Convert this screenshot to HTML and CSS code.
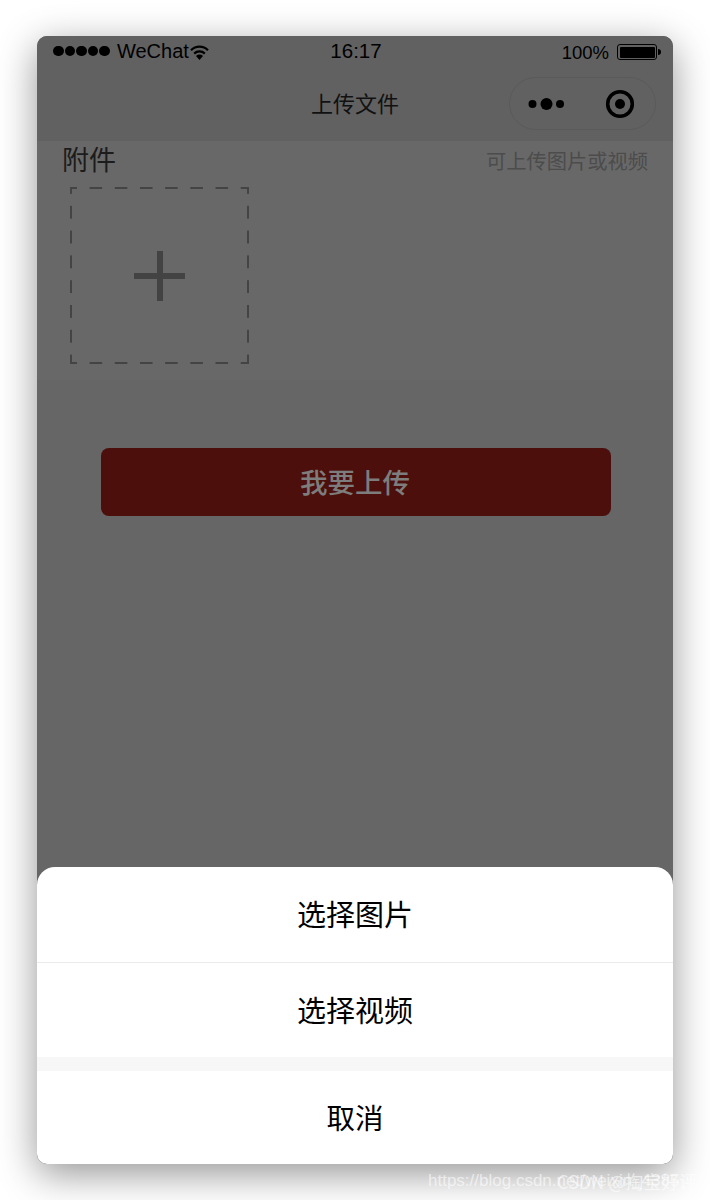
FILE: index.html
```html
<!DOCTYPE html>
<html lang="zh-CN">
<head>
<meta charset="utf-8">
<title>上传文件</title>
<link rel="stylesheet" href="styles.css">
</head>
<body>
<div class="phone">
  <div class="top">
    <div class="status">
      <div class="status-left">
        <span class="signal"><i></i><i></i><i></i><i></i><i></i></span>
        <span class="carrier">WeChat</span>
        <svg class="wifi" width="19" height="15" viewBox="0 0 19 15"><path d="M9.5 15 L6 11 A5 5 0 0 1 13 11 Z" fill="#000"/><path d="M4.2 8.6 A7.6 7.6 0 0 1 14.8 8.6" fill="none" stroke="#000" stroke-width="2.2"/><path d="M1 5.2 A12 12 0 0 1 18 5.2" fill="none" stroke="#000" stroke-width="2.2"/></svg>
      </div>
      <div class="time">16:17</div>
      <div class="status-right">
        <span class="percent">100%</span>
        <span class="battery"><span class="battery-fill"></span></span>
        <span class="battery-nub"></span>
      </div>
    </div>
    <div class="nav">
      <div class="title">上传文件</div>
      <div class="capsule">
        <svg width="36" height="14" viewBox="0 0 36 14"><circle cx="4.5" cy="7" r="4" fill="#000"/><circle cx="18.5" cy="7" r="6" fill="#000"/><circle cx="32" cy="7" r="4" fill="#000"/></svg>
        <svg width="30" height="30" viewBox="0 0 30 30"><circle cx="15" cy="15" r="12.3" fill="none" stroke="#000" stroke-width="3.6"/><circle cx="15" cy="15" r="5" fill="#000"/></svg>
      </div>
    </div>
  </div>
  <div class="attach">
    <div class="attach-head">
      <span class="attach-label">附件</span>
      <span class="attach-hint">可上传图片或视频</span>
    </div>
    <div class="upload-box"><span class="plus"></span></div>
  </div>
  <div class="main">
    <div class="submit">我要上传</div>
  </div>
  <div class="sheet">
    <div class="sheet-item sheet-first">选择图片</div>
    <div class="sheet-item sheet-second">选择视频</div>
    <div class="sheet-gap"></div>
    <div class="sheet-item sheet-cancel">取消</div>
  </div>
</div>
<div class="watermark"><span>https://blog.csdn.net/weixin_4385</span><span class="wm-over">CSDN @掏宝好评</span></div>
</body>
</html>
```
FILE: styles.css
```css
* { box-sizing: border-box; }
html, body { margin: 0; padding: 0; }
body {
  width: 710px;
  height: 1200px;
  padding: 36px 37px;
  background: #fff;
  font-family: "Noto Sans CJK SC", "Liberation Sans", sans-serif;
  overflow: hidden;
  position: relative;
}
.phone {
  position: relative;
  width: 636px;
  height: 1128px;
  border-radius: 10px;
  background: #666;
  box-shadow: 0 10px 38px rgba(0, 0, 0, .42);
  overflow: hidden;
  display: flex;
  flex-direction: column;
}
.top { background: #616161; height: 105px; flex: none; }
.status {
  height: 30px;
  display: grid;
  grid-template-columns: 1fr auto 1fr;
  align-items: center;
  padding: 0 12px 0 16px;
  color: #000;
}
.status-left { display: flex; align-items: center; height: 30px; }
.signal { display: flex; gap: 1px; margin-top: -2px; }
.signal i { width: 10.6px; height: 10.6px; border-radius: 50%; background: #000; display: block; }
.carrier { font-family: "Liberation Sans", sans-serif; font-size: 20px; margin: -3px 0 0 7px; line-height: 30px; }
.wifi { margin: 1px 0 0 1px; }
.time { font-family: "Liberation Sans", sans-serif; font-size: 20.5px; line-height: 28px; padding-bottom: 2px; margin-left: -2px; }
.status-right { display: flex; align-items: center; justify-content: flex-end; }
.percent { font-family: "Liberation Sans", sans-serif; font-size: 18.5px; line-height: 30px; margin-right: 8px; padding-top: 2px; }
.battery { width: 40px; height: 16px; border: 1.5px solid #000; border-radius: 3px; padding: 1.5px; display: block; }
.battery-fill { display: block; height: 100%; background: #000; border-radius: 1px; }
.battery-nub { width: 3px; height: 6px; background: #000; margin-left: 1px; border-radius: 0 3px 3px 0; }
.nav { position: relative; height: 75px; display: flex; align-items: center; justify-content: center; }
.title { font-size: 22px; color: #111; line-height: 30px; padding-bottom: 4px; height: 34px; }
.capsule {
  position: absolute;
  left: 472px;
  top: 11px;
  width: 147px;
  height: 53px;
  border: 1px solid #5a5a5a;
  border-radius: 27px;
  display: flex;
  align-items: center;
  justify-content: space-between;
  padding: 0 20px 0 18px;
}
.attach { height: 239px; flex: none; background: #686868; padding: 0 25px 0 25px; }
.attach-head { display: flex; justify-content: space-between; align-items: flex-start; height: 40px; }
.attach-label { font-size: 27px; color: #1c1c1c; line-height: 36px; }
.attach-hint { font-size: 20.25px; color: #4c4c4c; line-height: 40px; }
.upload-box {
  width: 179px;
  height: 177px;
  margin: 6px 0 0 8px;
  display: flex;
  align-items: center;
  justify-content: center;
  background-image:
    linear-gradient(90deg, #444 50%, transparent 50%),
    linear-gradient(90deg, #444 50%, transparent 50%),
    linear-gradient(180deg, #444 50%, transparent 50%),
    linear-gradient(180deg, #444 50%, transparent 50%);
  background-size: 25.2px 2px, 25.2px 2px, 2px 24.8px, 2px 24.8px;
  background-position: -5.6px 0, -5.6px 100%, 0 -6px, 100% -6px;
  background-repeat: repeat-x, repeat-x, repeat-y, repeat-y;
}
.plus { position: relative; width: 51px; height: 50px; display: block; }
.plus::before { content: ""; position: absolute; left: 0; right: 0; top: 22px; height: 6px; background: #434343; }
.plus::after { content: ""; position: absolute; top: 0; bottom: 0; left: 22.5px; width: 6px; background: #434343; }
.main { flex: 1; background: #666; padding: 68px 62px 0 64px; }
.submit {
  height: 68px;
  border-radius: 8px;
  background: #4c0f0b;
  color: #7d7d7d;
  font-size: 27.5px;
  font-weight: 500;
  line-height: 66px;
  text-align: center;
  padding-right: 2px;
}
.sheet {
  position: absolute;
  left: 0;
  right: 0;
  bottom: 0;
  background: #fff;
  border-radius: 18px 18px 0 0;
}
.sheet-item { font-size: 29px; color: #000; text-align: center; }
.sheet-first { height: 96px; line-height: 92px; border-bottom: 1px solid #eaeaea; }
.sheet-second { height: 94px; line-height: 92px; }
.sheet-gap { height: 14px; background: #f7f7f7; }
.sheet-cancel { height: 93px; font-size: 28.5px; line-height: 92px; }
.watermark {
  position: absolute;
  left: 428px;
  top: 1170px;
  color: rgba(255, 255, 255, .6);
  font-family: "Liberation Sans", sans-serif;
  font-size: 17px;
  line-height: 22px;
  white-space: nowrap;
}
.wm-over { position: absolute; left: 129px; top: 0; font-family: "Noto Sans CJK SC", sans-serif; font-size: 18px; }
```
